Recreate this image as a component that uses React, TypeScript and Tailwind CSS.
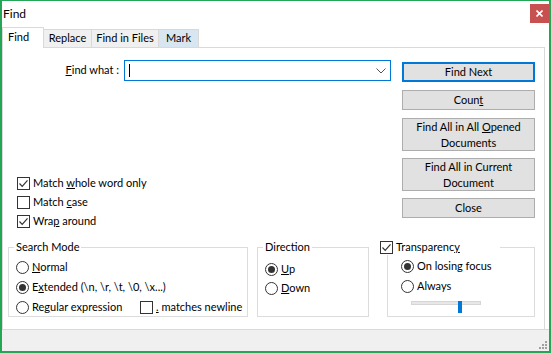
import type { ReactNode } from 'react'

function Check({ checked }: { checked?: boolean }) {
    return (
        <span className="flex h-[13px] w-[13px] shrink-0 items-center justify-center border border-[#333] bg-white">
            {checked && (
                <svg width="11" height="11" viewBox="0 0 11 11">
                    <path
                        d="M1.5 5.5 L4.2 8.3 L9.5 2.3"
                        fill="none"
                        stroke="#333"
                        strokeWidth="1.2"
                    />
                </svg>
            )}
        </span>
    )
}

function Radio({ checked }: { checked?: boolean }) {
    return (
        <span className="flex h-[13px] w-[13px] shrink-0 items-center justify-center rounded-full border border-[#333] bg-white">
            {checked && (
                <span className="h-[7px] w-[7px] rounded-full bg-[#333]" />
            )}
        </span>
    )
}

function Option({
    children,
    box,
}: {
    children: ReactNode
    box: ReactNode
}) {
    return (
        <div className="flex h-[19px] items-center gap-[3px] whitespace-nowrap">
            {box}
            <span>{children}</span>
        </div>
    )
}

function Btn({
    children,
    primary,
    tall,
    className = '',
}: {
    children: ReactNode
    primary?: boolean
    tall?: boolean
    className?: string
}) {
    return (
        <div
            className={`flex w-[133px] items-center justify-center bg-[#e1e1e1] text-center leading-[16px] ${
                primary
                    ? 'border-2 border-[#0078d7]'
                    : 'border border-[#adadad]'
            } ${tall ? 'h-[33px]' : 'h-[20px]'} ${className}`}
        >
            {children}
        </div>
    )
}

export default function App() {
    return (
        <div className="flex h-[353px] w-[551px] flex-col border-x-2 border-t border-b-2 border-[#25a556] bg-white font-['Lato',sans-serif] text-[11px] text-black">
            {/* title bar */}
            <div className="flex h-[26px] shrink-0 items-start justify-between">
                <span className="pl-[1px] pt-[4px] text-[12px]">Find</span>
                <div className="mt-[3px] flex h-[19px] w-[19px] items-center justify-center bg-[#c75050]">
                    <svg width="7" height="7" viewBox="0 0 7 7">
                        <path
                            d="M0.5 0.5 L6.5 6.5 M6.5 0.5 L0.5 6.5"
                            stroke="#fff"
                            strokeWidth="1.6"
                        />
                    </svg>
                </div>
            </div>

            {/* tabs */}
            <div className="flex h-[20px] shrink-0 items-end">
                <div className="relative z-10 -mb-px flex h-[21px] w-[42px] items-start border-x border-t border-[#d9d9d9] bg-white pt-[1px] pl-[5px]">
                    Find
                </div>
                <div className="flex h-[18px] w-[48px] items-center justify-center border-t border-r border-[#d9d9d9] bg-[#f0f0f0]">
                    Replace
                </div>
                <div className="flex h-[18px] w-[67px] items-center justify-center border-t border-r border-[#d9d9d9] bg-[#f0f0f0]">
                    Find in Files
                </div>
                <div className="flex h-[18px] w-[40px] items-center justify-center border-t border-r border-[#d9d9d9] bg-[#d8e6f2]">
                    Mark
                </div>
            </div>

            {/* tab panel */}
            <div className="mr-[4px] flex flex-1 flex-col border-x border-t border-[#d9d9d9]">
                <div className="flex pt-[12px]">
                    <div className="flex flex-col">
                        <div className="flex h-[21px] items-center">
                            <span className="w-[116px] text-right">
                                <span className="underline">F</span>ind what :
                            </span>
                            <div className="ml-[5px] flex h-[21px] w-[267px] items-center justify-between border border-[#0078d7] px-[4px]">
                                <span className="h-[13px] w-px bg-black" />
                                <svg width="10" height="6" viewBox="0 0 10 6">
                                    <path
                                        d="M0.5 0.5 L5 5 L9.5 0.5"
                                        fill="none"
                                        stroke="#555"
                                        strokeWidth="1"
                                    />
                                </svg>
                            </div>
                        </div>
                        <div className="mt-[93px] flex flex-col pl-[14px]">
                            <Option box={<Check checked />}>
                                Match <span className="underline">w</span>hole
                                word only
                            </Option>
                            <Option box={<Check />}>
                                Match <span className="underline">c</span>ase
                            </Option>
                            <Option box={<Check checked />}>
                                Wra<span className="underline">p</span> around
                            </Option>
                        </div>
                    </div>
                    <div className="ml-[11px] flex flex-col pt-[2px]">
                        <Btn primary>Find Next</Btn>
                        <Btn className="mt-[8px]">
                            <span>
                                Coun<span className="underline">t</span>
                            </span>
                        </Btn>
                        <Btn tall className="mt-[8px]">
                            <span>
                                Find All in All{' '}
                                <span className="underline">O</span>pened
                                <br />
                                Documents
                            </span>
                        </Btn>
                        <Btn tall className="mt-[7px]">
                            <span>
                                Find All in Current
                                <br />
                                Document
                            </span>
                        </Btn>
                        <Btn className="mt-[7px]">Close</Btn>
                    </div>
                </div>

                {/* groups */}
                <div className="mt-[8px] flex items-start pl-[5px]">
                    <fieldset className="h-[78px] w-[240px] min-w-0 shrink-0 border border-[#dcdcdc]">
                        <legend className="ml-[5px] px-[2px] leading-[16px]">
                            Search Mode
                        </legend>
                        <div className="mt-[3px] flex flex-col gap-px pl-[7px]">
                            <Option box={<Radio />}>
                                <span className="underline">N</span>ormal
                            </Option>
                            <Option box={<Radio checked />}>
                                E<span className="underline">x</span>tended
                                (\n, \r, \t, \0, \x...)
                            </Option>
                            <div className="flex items-center">
                                <div className="w-[124px]">
                                    <Option box={<Radio />}>
                                        Re<span className="underline">g</span>
                                        ular expression
                                    </Option>
                                </div>
                                <Option box={<Check />}>
                                    <span className="underline">.</span>{' '}
                                    matches newline
                                </Option>
                            </div>
                        </div>
                    </fieldset>

                    <fieldset className="ml-[9px] h-[78px] w-[112px] min-w-0 shrink-0 border border-[#dcdcdc]">
                        <legend className="ml-[5px] px-[2px] leading-[16px]">
                            Direction
                        </legend>
                        <div className="mt-[5px] flex flex-col pl-[7px]">
                            <Option box={<Radio checked />}>
                                <span className="underline">U</span>p
                            </Option>
                            <Option box={<Radio />}>
                                <span className="underline">D</span>own
                            </Option>
                        </div>
                    </fieldset>

                    <fieldset className="ml-[18px] h-[78px] w-[148px] min-w-0 shrink-0 border border-[#dcdcdc]">
                        <legend className="-ml-[8px] w-[120px] bg-white leading-[16px]">
                            <div className="flex items-center gap-[3px]">
                                <Check checked />
                                <span>
                                    Transparenc
                                    <span className="underline">y</span>
                                </span>
                            </div>
                        </legend>
                        <div className="mt-[2px] flex flex-col gap-px pl-[13px]">
                            <Option box={<Radio checked />}>
                                On losing focus
                            </Option>
                            <Option box={<Radio />}>Always</Option>
                        </div>
                        <div className="relative ml-[23px] mt-[2px] h-[12px] w-[70px]">
                            <div className="mt-[5px] h-[4px] w-[70px] border border-[#d6d6d6] bg-[#e7e7e7]" />
                            <div className="absolute top-0 left-[47px] h-[12px] w-[4px] bg-[#0078d7]" />
                        </div>
                    </fieldset>
                </div>
            </div>

            {/* bottom strip */}
            <div className="flex h-[22px] shrink-0 items-end justify-end border-t border-[#dadada] bg-[#f0f0f0] pr-[1px] pb-[1px]">
                <svg width="9" height="9" viewBox="0 0 9 9" fill="#a0a0a0">
                    <rect x="6" y="0" width="2" height="2" />
                    <rect x="3" y="3" width="2" height="2" />
                    <rect x="6" y="3" width="2" height="2" />
                    <rect x="0" y="6" width="2" height="2" />
                    <rect x="3" y="6" width="2" height="2" />
                    <rect x="6" y="6" width="2" height="2" />
                </svg>
            </div>
        </div>
    )
}
